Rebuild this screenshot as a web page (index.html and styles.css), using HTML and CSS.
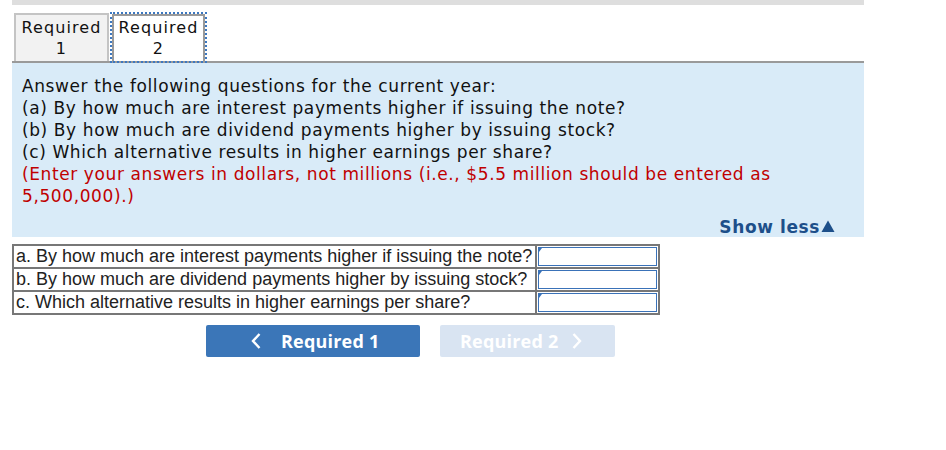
FILE: index.html
```html
<!DOCTYPE html>
<html>
<head>
<meta charset="utf-8">
<link rel="stylesheet" href="styles.css">
</head>
<body>
<div class="wrap">
  <div class="topbar"></div>
  <div class="tabs">
    <div class="tab tab-off">Required<br>1</div>
    <div class="tab tab-on">Required<br>2</div>
  </div>
  <div class="panel">
    <div class="q">Answer the following questions for the current year:</div>
    <div class="q">(a) By how much are interest payments higher if issuing the note?</div>
    <div class="q">(b) By how much are dividend payments higher by issuing stock?</div>
    <div class="q">(c) Which alternative results in higher earnings per share?</div>
    <div class="q red">(Enter your answers in dollars, not millions (i.e., $5.5 million should be entered as 5,500,000).)</div>
    <div class="showless">Show less<svg class="tri" width="14" height="12" viewBox="0 0 14 12"><path d="M7 0.5 L13.5 12 L0.5 12 Z" fill="#1d4f8a"/></svg></div>
  </div>
  <table class="ans">
    <tr><td class="lbl">a. By how much are interest payments higher if issuing the note?</td><td class="inp"><span class="corner"></span></td></tr>
    <tr><td class="lbl">b. By how much are dividend payments higher by issuing stock?</td><td class="inp"><span class="corner"></span></td></tr>
    <tr><td class="lbl">c. Which alternative results in higher earnings per share?</td><td class="inp"><span class="corner"></span></td></tr>
  </table>
  <div class="nav">
    <div class="btn btn-prev"><svg width="12" height="18" viewBox="0 0 12 18"><path d="M9.5 2 L3 9 L9.5 16" fill="none" stroke="#fff" stroke-width="2.4"/></svg><span>Required 1</span></div>
    <div class="btn btn-next"><span>Required 2</span><svg width="12" height="18" viewBox="0 0 12 18"><path d="M2.5 2 L9 9 L2.5 16" fill="none" stroke="#fff" stroke-width="2.4"/></svg></div>
  </div>
</div>
</body>
</html>
```
FILE: styles.css
```css
html, body { margin: 0; padding: 0; background: #fff; }
.wrap { margin-left: 12px; width: 852px; }
.topbar { height: 5px; background: #dedede; }
.tabs {
  display: flex;
  align-items: flex-end;
  margin-top: 8px;
  padding-left: 2px;
  border-bottom: 2px solid #9a9a9a;
  font-family: "DejaVu Sans", Verdana, sans-serif;
  font-size: 16px;
  letter-spacing: 1.1px;
  line-height: 21px;
  color: #111;
}
.tab { text-align: center; box-sizing: border-box; height: 48px; padding-top: 2px; }
.tab-off {
  width: 95px;
  background: #f2f2f2;
  border: 2px solid #c4c4c4;
  border-bottom: none;
}
.tab-on {
  width: 93px;
  margin-left: 3px;
  background: #fff;
  border: 2px solid #9a9a9a;
  border-bottom: none;
  outline: 2px dotted #3d78c0;
  height: 47px;
  padding-top: 1px;
}
.panel {
  background: #d9ebf8;
  padding: 12px 30px 0 10px;
  height: 162px;
  font-family: "DejaVu Sans", Verdana, sans-serif;
  font-size: 17px;
  letter-spacing: 0.6px;
  line-height: 22px;
  color: #111;
}
.red { color: #c00000; }
.showless {
  display: flex;
  justify-content: flex-end;
  align-items: center;
  gap: 1px;
  margin-top: 9px;
  margin-right: -1px;
  font-family: "DejaVu Sans", Verdana, sans-serif;
  font-weight: bold;
  font-size: 17px;
  letter-spacing: 0.6px;
  color: #1d4f8a;
}
.tri { margin-top: -2px; }
.ans {
  margin-top: 7px;
  border-collapse: collapse;
  border: 2px solid #777;
  font-family: "Liberation Sans", Arial, sans-serif;
  font-size: 18px;
  color: #222;
}
.ans td { border: 2px solid #777; height: 21px; padding: 0; }
.lbl { padding: 0 3px 0 2px !important; line-height: 21px; white-space: nowrap; }
.inp { width: 121px; position: relative; }
.inp::after {
  content: "";
  position: absolute;
  left: 1px; top: 1px; right: 1px; bottom: 1px;
  border: 1px solid #3a72b8;
}
.corner {
  position: absolute;
  left: 2px; top: 2px;
  width: 0; height: 0;
  border-top: 4px solid #3a72b8;
  border-right: 3px solid transparent;
}
.nav { display: flex; margin-top: 10px; margin-left: 194px; gap: 20px; }
.btn {
  height: 32px;
  border-radius: 2px;
  display: flex;
  align-items: center;
  color: #fff;
  font-family: "Open Sans", "Noto Sans", sans-serif;
  font-weight: bold;
  font-size: 18px;
  box-sizing: border-box;
}
.btn-prev { width: 214px; background: #3b76b8; padding-left: 44px; gap: 19px; }
.btn-next { width: 175px; background: #d9e4f2; padding-left: 20px; gap: 13px; }
.btn-next span { letter-spacing: 0.2px; }
.btn-prev span { letter-spacing: 0.2px; }
```
